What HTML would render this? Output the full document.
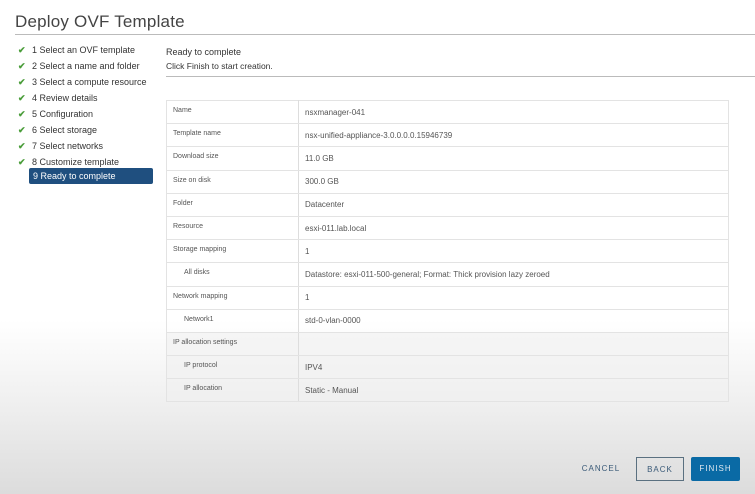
<!DOCTYPE html>
<html><head><style>
body{margin:0;width:755px;height:494px;overflow:hidden;font-family:"Liberation Sans",sans-serif;color:#333;
background:linear-gradient(to bottom,#fff 0,#fff 320px,#f0f0f0 400px,#dcdcdc 494px);position:relative}
.t{position:absolute;left:15px;top:12px;font-size:17px;color:#444;letter-spacing:0.2px}
.hr{position:absolute;left:15px;top:34px;width:740px;height:1px;background:#bbb}
.nav{position:absolute;left:18px;top:44px;font-size:9px;color:#333}
.nav div{height:16px;line-height:12px;white-space:nowrap}
.ck{color:#4a9d3a;font-weight:bold;display:inline-block;width:14px}
.sel{position:absolute;left:29px;top:168px;width:124px;height:16px;background:#1f4f7f;border-radius:2px;color:#fff;font-size:9px;line-height:16px;padding-left:4px;box-sizing:border-box}
.h1{position:absolute;left:166px;top:47px;font-size:9px}
.h2{position:absolute;left:166px;top:61px;font-size:8.5px}
.hr2{position:absolute;left:166px;top:76px;width:590px;height:1px;background:#bbb}
table{position:absolute;left:166px;top:100px;width:563px;border-collapse:collapse;font-size:8px;border:1px solid #e3e3e3}
td{height:22.2px;border-bottom:1px solid #e3e3e3;padding:0 0 0 6px;color:#555;vertical-align:middle}
td:first-child{width:132px;border-right:1px solid #ddd;font-size:7px;color:#555;padding-bottom:3px;box-sizing:border-box}
td.i{padding-left:17px}
tr.g td{background:rgba(240,240,240,.6)}
.btn{position:absolute;top:457px;height:24px;font-size:8px;letter-spacing:1px;line-height:24px;text-align:center;box-sizing:border-box}
</style></head><body>
<div class="t">Deploy OVF Template</div><div class="hr"></div>
<div class="nav">
<div><span class="ck">✔</span>1 Select an OVF template</div>
<div><span class="ck">✔</span>2 Select a name and folder</div>
<div><span class="ck">✔</span>3 Select a compute resource</div>
<div><span class="ck">✔</span>4 Review details</div>
<div><span class="ck">✔</span>5 Configuration</div>
<div><span class="ck">✔</span>6 Select storage</div>
<div><span class="ck">✔</span>7 Select networks</div>
<div><span class="ck">✔</span>8 Customize template</div>
</div>
<div class="sel">9 Ready to complete</div>
<div class="h1">Ready to complete</div>
<div class="h2">Click Finish to start creation.</div>
<div class="hr2"></div>
<table>
<tr><td>Name</td><td>nsxmanager-041</td></tr>
<tr><td>Template name</td><td>nsx-unified-appliance-3.0.0.0.0.15946739</td></tr>
<tr><td>Download size</td><td>11.0 GB</td></tr>
<tr><td>Size on disk</td><td>300.0 GB</td></tr>
<tr><td>Folder</td><td>Datacenter</td></tr>
<tr><td>Resource</td><td>esxi-011.lab.local</td></tr>
<tr><td>Storage mapping</td><td>1</td></tr>
<tr><td class="i">All disks</td><td>Datastore: esxi-011-500-general; Format: Thick provision lazy zeroed</td></tr>
<tr><td>Network mapping</td><td>1</td></tr>
<tr><td class="i">Network1</td><td>std-0-vlan-0000</td></tr>
<tr class="g"><td>IP allocation settings</td><td></td></tr>
<tr class="g"><td class="i">IP protocol</td><td>IPV4</td></tr>
<tr class="g"><td class="i">IP allocation</td><td>Static - Manual</td></tr>
</table>
<div class="btn" style="left:576px;width:50px;color:#3a5a78">CANCEL</div>
<div class="btn" style="left:636px;width:48px;border:1px solid #5a7080;color:#3a5a78">BACK</div>
<div class="btn" style="left:691px;width:49px;background:#0a6aa5;color:#dfe8f0;border-radius:2px">FINISH</div>
</body></html>
